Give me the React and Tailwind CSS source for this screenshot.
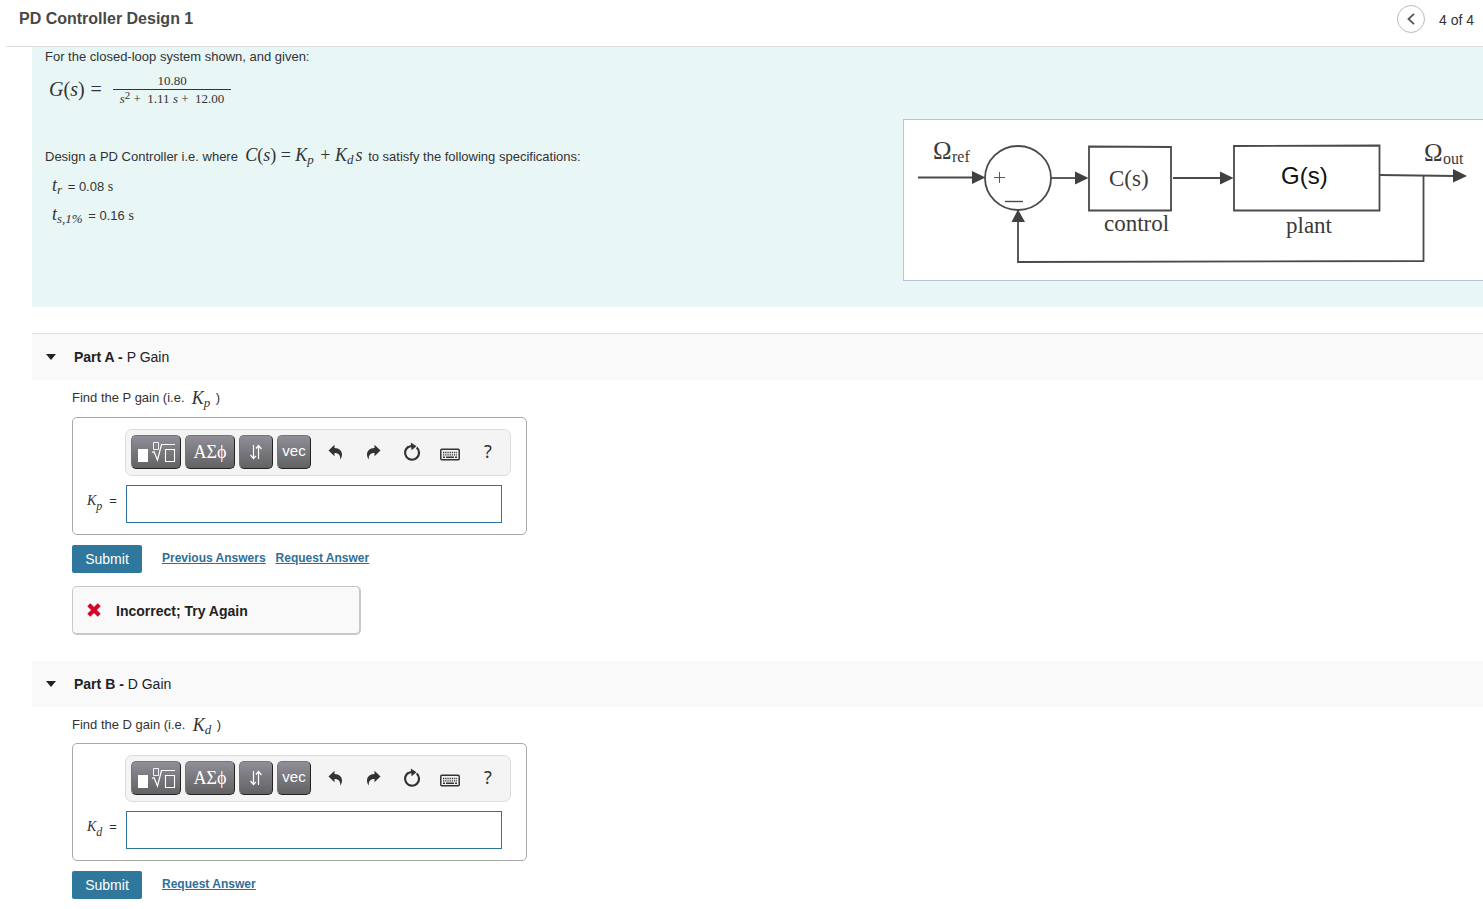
import React, { useState } from 'react';

const SERIF = "font-['Liberation_Serif',serif]";

function Var({ name, sub }) {
  return (
    <span className="mr-[2px] font-['Liberation_Serif',serif] text-[18px] italic leading-none">
      {name}
      {sub && <sub className="bottom-[-3px] text-[13px] font-medium">{sub}</sub>}
    </span>
  );
}

function TransferFunction() {
  return (
    <div className={`${SERIF} mt-[3px] ml-1 flex h-10 items-center`}>
      <span className="w-[64px] pb-[2px] text-[20px] leading-none whitespace-pre">
        <i>G</i>(<i>s</i>)<span className="ml-[6px]">=</span>
      </span>
      <div className="flex w-[118px] flex-col text-center text-[13px] font-medium">
        <span className="border-b border-[#333] leading-4">10.80</span>
        <span className="leading-[18px] whitespace-pre">
          <i>s</i><sup className="top-[-4px] text-[11px]">2</sup> +  1.11 <i>s</i> +  12.00
        </span>
      </div>
    </div>
  );
}

function BlockDiagram() {
  return (
    <svg width="579" height="160" viewBox="0 0 579 160" role="img" aria-label="Closed-loop block diagram">
      <g fill="none" stroke="#4a4a4a" strokeWidth="1.8">
        <path d="M14 57.5H70" />
        <ellipse cx="114" cy="58" rx="33" ry="32" />
        <path d="M101 81.5h18" strokeWidth="1.4" />
        <path d="M90 57.5h11M95.500 52v11" strokeWidth="0.9" />
        <path d="M147 58h26" />
        <path d="M185 26.500L267 27V90.500H185Z" />
        <path d="M269 58h50" />
        <path d="M330 26L475.500 25.500V90.500H330Z" />
        <path d="M476 55L551 56" />
        <path d="M519.500 55V141L114 142V100" />
      </g>
      <g fill="#404040">
        <path d="M68 51v13l13.500-6.500Z" />
        <path d="M171 51.500v13l13.500-6.500Z" />
        <path d="M316 51.500v13l13.500-6.500Z" />
        <path d="M549 49v13.500l14-6.500Z" />
        <path d="M107.500 102h13.500l-7-12.500Z" />
      </g>
      <g className="font-['Liberation_Serif',serif]" fill="#3a3a3a">
        <text x="29" y="39" fontSize="25">Ω</text>
        <text x="48" y="42" fontSize="16">ref</text>
        <text x="205" y="66" fontSize="23">C(s)</text>
        <text x="200" y="111" fontSize="23">control</text>
        <text x="382" y="113" fontSize="23">plant</text>
        <text x="520" y="41" fontSize="25">Ω</text>
        <text x="539" y="44" fontSize="16">out</text>
      </g>
      <text className="font-['Liberation_Sans',sans-serif]" x="377" y="64" fontSize="24" fill="#111">G(s)</text>
    </svg>
  );
}

function TemplateIcon() {
  return (
    <svg width="38" height="24" viewBox="0 0 38 24" fill="none" stroke="#fff">
      <path d="M0 9h10v13H0Z" fill="#fff" stroke="none" />
      <path d="M15.500 2.500h5v7h-5Z" strokeWidth="0.9" />
      <path d="M14 12.500l2-1 3.500 8.500L23.500 4.500H37" strokeWidth="1.200" />
      <path d="M27.500 9.500h9v12h-9Z" strokeWidth="1.100" />
    </svg>
  );
}

function ArrowsIcon() {
  return (
    <svg width="14" height="16" viewBox="0 0 14 16" fill="none" stroke="#fff" strokeWidth="1.200">
      <path d="M4.500 1v13.500M1.500 11l3 3.500L7 12M9.500 15V1.500M7 4.500l2.500-3L12.500 5" />
    </svg>
  );
}

function UndoIcon({ flip }) {
  return (
    <svg width="15" height="16" viewBox="0 0 15 16" fill="#333" className={flip ? '-scale-x-100' : ''}>
      <path d="M0.500 6.500L6.500 0.800V4C11.500 4 14 7 14 10.500C14 12.500 13.300 14.200 12.200 15.500C12.500 11.500 11 9 6.500 9V12.200Z" />
    </svg>
  );
}

function ResetIcon() {
  return (
    <svg width="18" height="20" viewBox="0 0 18 20" fill="none">
      <path d="M5.500 4.700A7 7 0 1 0 13.700 5.500" stroke="#333" strokeWidth="2.200" />
      <path d="M7.800 0.500L13.500 4.200L8.500 8.200Z" fill="#333" />
      <path d="M5 5.300Q7 4 9.500 4" stroke="#333" strokeWidth="2" />
    </svg>
  );
}

function KeyboardIcon() {
  return (
    <svg width="20" height="13" viewBox="0 0 20 13" fill="none" stroke="#333">
      <rect x="0.800" y="1.300" width="18.400" height="10.400" rx="1" strokeWidth="1.500" />
      <path d="M3 4.500h14M3 6.800h14" strokeWidth="1.300" strokeDasharray="1.300 0.900" />
      <path d="M3 9.300h2M6 9.300h8M15 9.300h2" strokeWidth="1.400" />
    </svg>
  );
}

const keyClass =
  'flex h-[34px] shrink-0 items-center justify-center rounded-[5px] border border-t-[#77757c] border-l-[#77757c] border-r-[#222] border-b-[#222] bg-linear-to-b from-[#918e98] to-[#626264] text-white';
const toolClass = 'flex h-[34px] w-[38px] items-center justify-center pb-[2px]';

function MathToolbar() {
  return (
    <div className="flex h-[47px] items-center rounded-[7px] border border-[#dcdcdc] bg-[#f4f4f4] pl-[5px]">
      <div className="mr-[5px] flex gap-1 pb-px">
        <button type="button" aria-label="Templates" className={`${keyClass} w-[50px] pl-[2px]`}><TemplateIcon /></button>
        <button type="button" className={`${keyClass} ${SERIF} w-[50px] text-[18px]`}>ΑΣϕ</button>
        <button type="button" aria-label="Arrows" className={`${keyClass} w-[34px]`}><ArrowsIcon /></button>
        <button type="button" className={`${keyClass} w-[34px] pb-[2px] text-[15px]`}>vec</button>
      </div>
      <button type="button" aria-label="Undo" className={toolClass}><UndoIcon /></button>
      <button type="button" aria-label="Redo" className={toolClass}><UndoIcon flip /></button>
      <button type="button" aria-label="Reset" className={`${toolClass} pl-[2px]`}><ResetIcon /></button>
      <button type="button" aria-label="Keyboard" className="flex h-[34px] w-[38px] items-center justify-center pt-[3px] pl-[2px]"><KeyboardIcon /></button>
      <button type="button" aria-label="Help" className={`${toolClass} pl-[2px] font-['Noto_Sans',sans-serif] text-[18px] text-[#333]`}>?</button>
    </div>
  );
}

function AnswerBox({ sub }) {
  const [value, setValue] = useState('');
  const id = `answer-${sub}`;

  return (
    <div className="w-[455px] rounded-[5px] border border-[#a8a8a8] pt-[11px] pr-[15px] pb-[11px] pl-[14px]">
      <div className="ml-[38px]">
        <MathToolbar />
      </div>
      <div className="mt-[9px] flex items-center">
        <label htmlFor={id} className="w-[39px] pb-[6px] text-[13px] leading-5">
          <span className={`${SERIF} text-[14px] italic`}>K<sub className="bottom-[-5px] text-[12px]">{sub}</sub></span>
          <span className="ml-[7px]">=</span>
        </label>
        <input
          id={id}
          type="text"
          value={value}
          onChange={(e) => setValue(e.target.value)}
          className="h-[38px] w-[376px] border border-[#2e759e] bg-white px-2 outline-none"
        />
      </div>
    </div>
  );
}

function Part({ letter, title, find, sub, links, feedback, first }) {
  const [open, setOpen] = useState(true);

  return (
    <section>
      <h2 className={`bg-[#f9f9f9] ${first ? 'border-t border-[#ddd]' : ''}`}>
        <button type="button" onClick={() => setOpen(!open)} className="flex h-[46px] w-full items-center px-[14px] text-[14px] text-[#222]">
          <svg width="10" height="6" viewBox="0 0 10 6" fill="#222" className="mr-[18px]">
            <path d="M0 0H10L5 6Z" />
          </svg>
          <span><b>Part {letter} -</b> {title}</span>
        </button>
      </h2>
      {open && (
        <div className="pl-10">
          <p className={`flex items-center pb-px whitespace-pre text-[13px] ${first ? 'h-[37px]' : 'h-9'}`}>
            {find} (i.e.  <Var name="K" sub={sub} /> )
          </p>
          <AnswerBox sub={sub} />
          <div className="mt-[10px] flex h-7 items-center">
            <button type="button" className="h-7 w-[70px] rounded-[2px] bg-[#2f779d] text-[14px] text-white">Submit</button>
            <div className="ml-5 flex gap-[10px] pb-[3px] text-[12px] font-bold text-[#2f6f97] underline">
              {links.map((text) => <a key={text} href="#">{text}</a>)}
            </div>
          </div>
          {feedback && (
            <div className="mt-[13px] flex h-[49px] w-[289px] items-center rounded-[5px] border border-r-2 border-b-2 border-[#c8c8c8] bg-[#f9f9f9] pl-[14px] text-[14px] font-bold text-[#222]">
              <svg width="14" height="14" viewBox="0 0 14 14" fill="none" stroke="#d50628" strokeWidth="4.200" className="mr-[15px]">
                <path d="M1.800 1.800L12.200 12.200M12.200 1.800L1.800 12.200" />
              </svg>
              <span className="pt-[2px]">{feedback}</span>
            </div>
          )}
        </div>
      )}
    </section>
  );
}

function App() {
  return (
    <div className="min-h-screen overflow-x-hidden bg-white pb-[10px] font-['Liberation_Sans',Arial,sans-serif] text-[13px] text-[#333]">
      <header className="ml-[6px] flex h-[47px] items-start justify-between border-b border-[#ddd] pt-[5px] pr-[9px] pl-[13px]">
        <h1 className="text-[16px] leading-[27px] font-bold text-[#484848]">PD Controller Design 1</h1>
        <nav className="flex items-center text-[14px]">
          <button type="button" aria-label="Previous item" className="flex size-7 items-center justify-center rounded-full border border-[#bbb]">
            <svg width="8" height="12" viewBox="0 0 8 12" fill="none" stroke="#555" strokeWidth="1.800">
              <path d="M7 0.800L1.500 6L7 11.200" />
            </svg>
          </button>
          <span className="ml-[14px] pt-[3px]">4 of 4</span>
        </nav>
      </header>

      <main className="ml-8">
        <section className="flex h-[260px] justify-between bg-[#e8f6f6] pl-[13px]">
          <div>
            <p className="leading-5">For the closed-loop system shown, and given:</p>
            <TransferFunction />
            <p className="mt-9 h-5 leading-5 whitespace-pre">
              Design a PD Controller i.e. where  <span className={`${SERIF} text-[18px] leading-none`}><i>C</i>(<i>s</i>) = </span><Var name="K" sub="p" /><span className={`${SERIF} text-[18px] leading-none`}> + </span><Var name="K" sub="d" /><Var name="s" /> to satisfy the following specifications:
            </p>
            <p className="mt-[10px] ml-[7px] h-5 leading-5"><Var name="t" sub="r" /> = 0.08 <span className={`${SERIF} text-[14px]`}>s</span></p>
            <p className="mt-[9px] ml-[7px] h-5 leading-5"><Var name="t" sub="s,1%" /> = 0.16 <span className={`${SERIF} text-[14px]`}>s</span></p>
          </div>
          <figure className="mt-[72px] h-[162px] shrink-0 border border-r-0 border-[#b5c7d8] bg-white">
            <BlockDiagram />
          </figure>
        </section>

        <div className="mt-[26px] flex flex-col gap-[26px]">
          <Part
            first
            letter="A"
            title="P Gain"
            find="Find the P gain"
            sub="p"
            links={['Previous Answers', 'Request Answer']}
            feedback="Incorrect; Try Again"
          />
          <Part letter="B" title="D Gain" find="Find the D gain" sub="d" links={['Request Answer']} />
        </div>
      </main>
    </div>
  );
}

export default App;
